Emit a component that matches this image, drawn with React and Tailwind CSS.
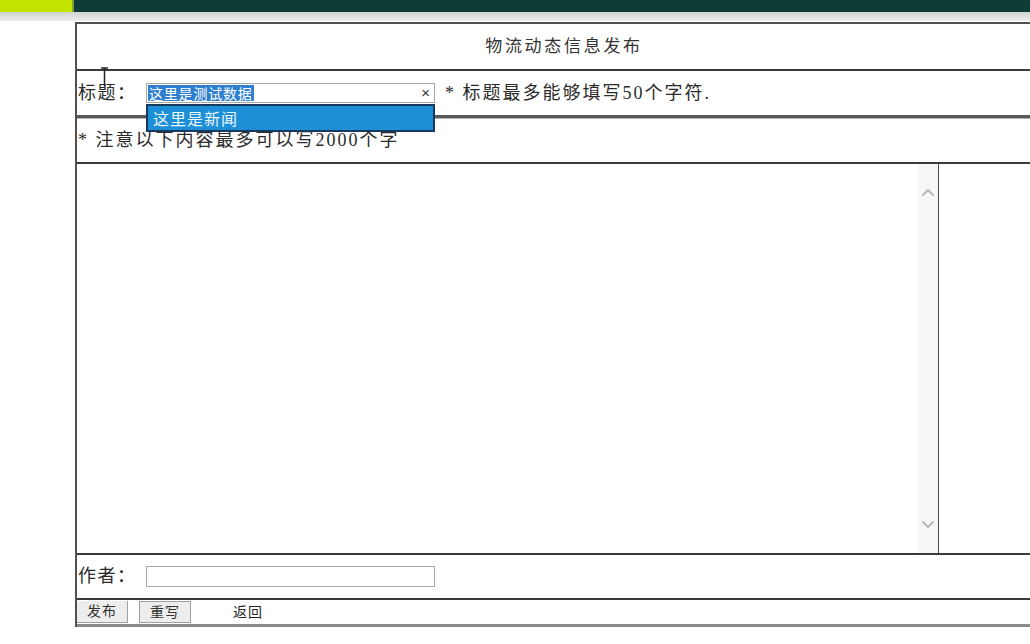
export default function App() {
  const serif = "font-['Liberation_Serif','Noto_Sans_CJK_SC',serif]";
  return (
    <div className={`w-[1030px] h-[644px] overflow-hidden bg-white relative ${serif} text-[#2b2b2b]`}>
      {/* top bars */}
      <div className="flex h-[12px]">
        <div className="w-[72px] bg-[#c4e400]" />
        <div className="w-[2px] bg-[#7fa040]" />
        <div className="flex-1 bg-[#0f3c37]" />
      </div>
      <div className="h-[9px] bg-gradient-to-b from-[#cfd3cf] to-[#eceeec]" />
      <div className="h-[1px]" />

      {/* table */}
      <div className="ml-[75px] w-[976px] border-l-2 border-t-2 border-[#505050] relative">
        {/* row 1 title */}
        <div className="h-[47px] border-b-2 border-[#3a3a3a] flex items-center justify-center">
          <span className="text-[17px] tracking-[2.7px] text-[#333]">物流动态信息发布</span>
        </div>

        {/* row 2 title input */}
        <div className="h-[47px] border-b-[3px] border-[#5a5a5a] shadow-[0_1px_0_#b0b0b0] flex items-center relative">
          <span className="w-[69px] text-[18px] tracking-[1.5px] pl-[1px]">标题：</span>
          <div className="w-[289px] h-[20px] border border-[#a8a8a8] bg-white flex items-center relative">
            <span className="ml-[1px] bg-[#2f7fd0] text-white text-[14px] leading-[16px] tracking-[0.8px] px-[1px] font-['Noto_Sans_CJK_SC',sans-serif]">这里是测试数据</span>
            <span className="absolute right-[4px] top-[-2px] text-[15px] text-[#333] font-['Liberation_Sans',sans-serif]">×</span>
          </div>
          <span className="ml-[10px] text-[18px] tracking-[2px]">* 标题最多能够填写50个字符.</span>
          {/* dropdown */}
          <div className="absolute left-[69px] top-[33px] w-[289px] h-[28px] bg-[#1c8fd6] border-2 border-[#173a5c] flex items-center z-10">
            <span className="ml-[5px] text-[16px] tracking-[1px] text-[#eaf6ff] font-['Noto_Sans_CJK_SC',sans-serif]">这里是新闻</span>
          </div>
        </div>

        {/* row 3 note */}
        <div className="h-[46px] border-b-2 border-[#3a3a3a] flex items-center">
          <span className="text-[18px] tracking-[2px] pl-[1px]">* 注意以下内容最多可以写2000个字</span>
        </div>

        {/* row 4 textarea */}
        <div className="h-[391px] border-b-2 border-[#3a3a3a] flex">
          <div className="w-[841px] bg-white" />
          <div className="w-[20px] bg-[#f6f6f6] flex flex-col items-center justify-between pt-[24px] pb-[24px]">
            <svg width="14" height="9" viewBox="0 0 14 9">
              <path d="M1.5 7.5 L7 2 L12.5 7.5" fill="none" stroke="#b8b8b8" strokeWidth="2" />
            </svg>
            <svg width="14" height="9" viewBox="0 0 14 9">
              <path d="M1.5 1.5 L7 7 L12.5 1.5" fill="none" stroke="#b8b8b8" strokeWidth="2" />
            </svg>
          </div>
          <div className="w-[1px] bg-[#4a4a4a]" />
          <div className="flex-1" />
        </div>

        {/* row 5 author */}
        <div className="h-[45px] border-b-2 border-[#3a3a3a] flex items-center">
          <span className="w-[69px] text-[18px] tracking-[1.5px] pl-[1px]">作者：</span>
          <div className="w-[289px] h-[21px] border border-[#a8a8a8] bg-white" />
        </div>

        {/* row 6 buttons */}
        <div className="h-[27px] border-b-[3px] border-[#8a8a8a] flex items-center font-['Liberation_Sans','Noto_Sans_CJK_SC',sans-serif]">
          <div className="w-[51px] h-[22px] bg-[#ededed] border-r border-b border-[#a0a0a0] flex items-center justify-center text-[14px] text-[#333] tracking-[1px]">发布</div>
          <div className="ml-[11px] w-[52px] h-[22px] bg-[#ededed] border border-[#a0a0a0] flex items-center justify-center text-[14px] text-[#333] tracking-[1px]">重写</div>
          <span className="ml-[42px] text-[14px] text-[#222] tracking-[1px]">返回</span>
        </div>
      </div>

      {/* text cursor */}
      <svg className="absolute left-[100px] top-[67px]" width="9" height="20" viewBox="0 0 9 20">
        <path d="M1 1 H8 M4.5 1 V19" stroke="#222" strokeWidth="1.5" fill="none" />
      </svg>
    </div>
  );
}
